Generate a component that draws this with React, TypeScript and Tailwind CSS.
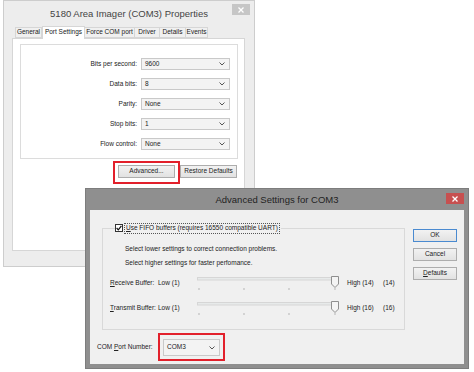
import React from "react";

const font = { fontFamily: '"Liberation Sans", Arial, sans-serif' };

function Chevron() {
  return (
    <svg width="6" height="4" viewBox="0 0 6 4" className="shrink-0">
      <polyline points="0.5,0.5 3,3 5.5,0.5" fill="none" stroke="#555" strokeWidth="1" />
    </svg>
  );
}

function Select({ value, w = "w-[89px]", h = "h-[12px]" }: { value: string; w?: string; h?: string }) {
  return (
    <div className={`${w} ${h} flex items-center justify-between border border-[#c9c9c9] bg-[#f3f3f3] pl-[3px] pr-[4px] text-[#222]`}>
      <span>{value}</span>
      <Chevron />
    </div>
  );
}

function WinButton({ children, w = "w-[57px]", focus = false }: { children: React.ReactNode; w?: string; focus?: boolean }) {
  return (
    <div
      className={`${w} h-[13px] flex items-center justify-center border bg-gradient-to-b from-[#f2f2f2] to-[#e2e2e2] text-[#222] ${
        focus ? "border-[#4a8ad0]" : "border-[#adadad]"
      }`}
    >
      {children}
    </div>
  );
}

function CloseX({ color = "white" }: { color?: string }) {
  return (
    <svg width="6" height="6" viewBox="0 0 6 6">
      <path d="M0.5 0.5 L5.5 5.5 M5.5 0.5 L0.5 5.5" stroke={color} strokeWidth="1.3" />
    </svg>
  );
}

function Slider() {
  return (
    <svg width="142" height="16" viewBox="0 0 142 16" className="shrink-0">
      <rect x="0.5" y="1.5" width="138" height="2.5" fill="#e7eaea" stroke="#d6d6d6" strokeWidth="1" />
      {[2, 47, 92, 138].map((x) => (
        <line key={x} x1={x} y1="12" x2={x} y2="14" stroke="#b5b5b5" strokeWidth="1" />
      ))}
      <path d="M134.5 0.5 H141.5 V8 L138 11.5 L134.5 8 Z" fill="#f4f4f4" stroke="#8f8f8f" strokeWidth="1" />
    </svg>
  );
}

function BufferRow({ label, high, val }: { label: React.ReactNode; high: string; val: string }) {
  return (
    <div className="flex items-start h-[16px]">
      <span className="w-[48px] mt-[4px]">{label}</span>
      <span className="w-[39px] mt-[4px]">Low (1)</span>
      <Slider />
      <span className="ml-[8px] w-[36px] mt-[4px]">{high}</span>
      <span className="mt-[4px]">{val}</span>
    </div>
  );
}

const tabs = [
  { t: "General", w: "w-[27px]" },
  { t: "Port Settings", w: "w-[43px]", active: true },
  { t: "Force COM port", w: "w-[51px]" },
  { t: "Driver", w: "w-[26px]" },
  { t: "Details", w: "w-[27px]" },
  { t: "Events", w: "w-[23px]" },
];

const rows = [
  ["Bits per second:", "9600"],
  ["Data bits:", "8"],
  ["Parity:", "None"],
  ["Stop bits:", "1"],
  ["Flow control:", "None"],
];

export default function App() {
  return (
    <div className="relative w-[474px] h-[372px] bg-white overflow-hidden text-[6.5px] leading-none" style={font}>
      {/* Properties window */}
      <div className="absolute left-[3px] top-0 w-[252px] h-[267px] bg-[#ededed] border border-[#cdcdcd] flex flex-col">
        <div className="relative h-[25px] flex items-center justify-center text-[9.5px] text-[#444]">
          5180 Area Imager (COM3) Properties
          <div className="absolute right-[4px] top-[3px] w-[18px] h-[11px] bg-[#c6c6c6] flex items-center justify-center">
            <CloseX />
          </div>
        </div>
        <div className="pl-[8px] flex flex-col">
          <div className="flex items-end h-[12px] pl-[3px]">
            {tabs.map((tab) => (
              <div
                key={tab.t}
                className={`${tab.w} flex items-center justify-center border border-[#d6d6d6] text-[#222] ${
                  tab.active ? "h-[13px] bg-white border-b-0 -mb-px relative z-10 items-start pt-[2px]" : "h-[11px] bg-[#f0f0f0] -ml-px first:ml-0"
                }`}
              >
                {tab.t}
              </div>
            ))}
          </div>
          <div className="w-[233px] h-[213px] bg-white border border-[#d6d6d6] pt-[5px] pl-[7px]">
            <div className="w-[218px] h-[115px] border border-[#dcdcdc] flex flex-col gap-[8px] pt-[13px]">
              {rows.map(([l, v]) => (
                <div key={l} className="flex items-center h-[12px] text-[#222]">
                  <span className="w-[116px] text-right">{l}</span>
                  <div className="ml-[4px]">
                    <Select value={v} />
                  </div>
                </div>
              ))}
            </div>
            <div className="flex justify-end gap-[5px] pr-[7px] mt-[6px]">
              <div className="relative">
                <WinButton>Advanced...</WinButton>
                <div className="absolute left-[-5px] right-[-5px] top-[-4px] bottom-[-6px] border-2 border-[#e2202b]" />
              </div>
              <WinButton>Restore Defaults</WinButton>
            </div>
          </div>
        </div>
      </div>

      {/* Advanced settings window */}
      <div className="absolute left-[85px] top-[188px] w-[384px] h-[181px] bg-[#8f8f8f] border border-[#7d7d7d] flex flex-col">
        <div className="relative h-[21px] flex items-center justify-center text-[9.5px] text-[#1f1f1f]">
          Advanced Settings for COM3
          <div className="absolute right-[4px] top-[4px] w-[18px] h-[11px] bg-[#c75050] flex items-center justify-center">
            <CloseX />
          </div>
        </div>
        <div className="mx-[4px] h-[154px] bg-[#f0f0f0] text-[#222] flex flex-col">
          <div className="flex items-start pt-[18px] pl-[12px]">
            <div className="relative w-[303px] h-[102px] border border-[#d9d9d9]">
              <div className="absolute -top-[5px] left-[12px] bg-[#f0f0f0] pr-[2px] flex items-center gap-[2px]">
                <div className="w-[8px] h-[8px] bg-white border border-[#333] flex items-center justify-center">
                  <svg width="6" height="6" viewBox="0 0 6 6">
                    <polyline points="0.6,3 2.3,4.8 5.4,0.8" fill="none" stroke="#111" strokeWidth="1.2" />
                  </svg>
                </div>
                <span className="outline outline-1 outline-dotted outline-[#555] px-[1px] py-[1px]">
                  <span className="underline">U</span>se FIFO buffers (requires 16550 compatible UART)
                </span>
              </div>
              <div className="flex flex-col gap-[6px] pl-[22px] pt-[16px]">
                <span className="h-[8px] flex items-center">Select lower settings to correct connection problems.</span>
                <span className="h-[8px] flex items-center">Select higher settings for faster perfomance.</span>
              </div>
              <div className="flex flex-col gap-[9px] pl-[7px] mt-[9px]">
                <BufferRow
                  label={<><span className="underline">R</span>eceive Buffer:</>}
                  high="High (14)"
                  val="(14)"
                />
                <BufferRow
                  label={<><span className="underline">T</span>ransmit Buffer:</>}
                  high="High (16)"
                  val="(16)"
                />
              </div>
            </div>
            <div className="ml-[8px] mt-[1px] flex flex-col gap-[6px]">
              <WinButton w="w-[44px]" focus>OK</WinButton>
              <WinButton w="w-[44px]">Cancel</WinButton>
              <WinButton w="w-[44px]"><span className="underline">D</span>efaults</WinButton>
            </div>
          </div>
          <div className="flex items-center pl-[7px] mt-[9px]">
            <span className="w-[66px]">
              COM <span className="underline">P</span>ort Number:
            </span>
            <div className="relative">
              <Select value="COM3" w="w-[57px]" h="h-[17px]" />
              <div className="absolute left-[-5px] right-[-5px] top-[-6px] bottom-[-5px] border-2 border-[#e2202b]" />
            </div>
          </div>
        </div>
      </div>
    </div>
  );
}
